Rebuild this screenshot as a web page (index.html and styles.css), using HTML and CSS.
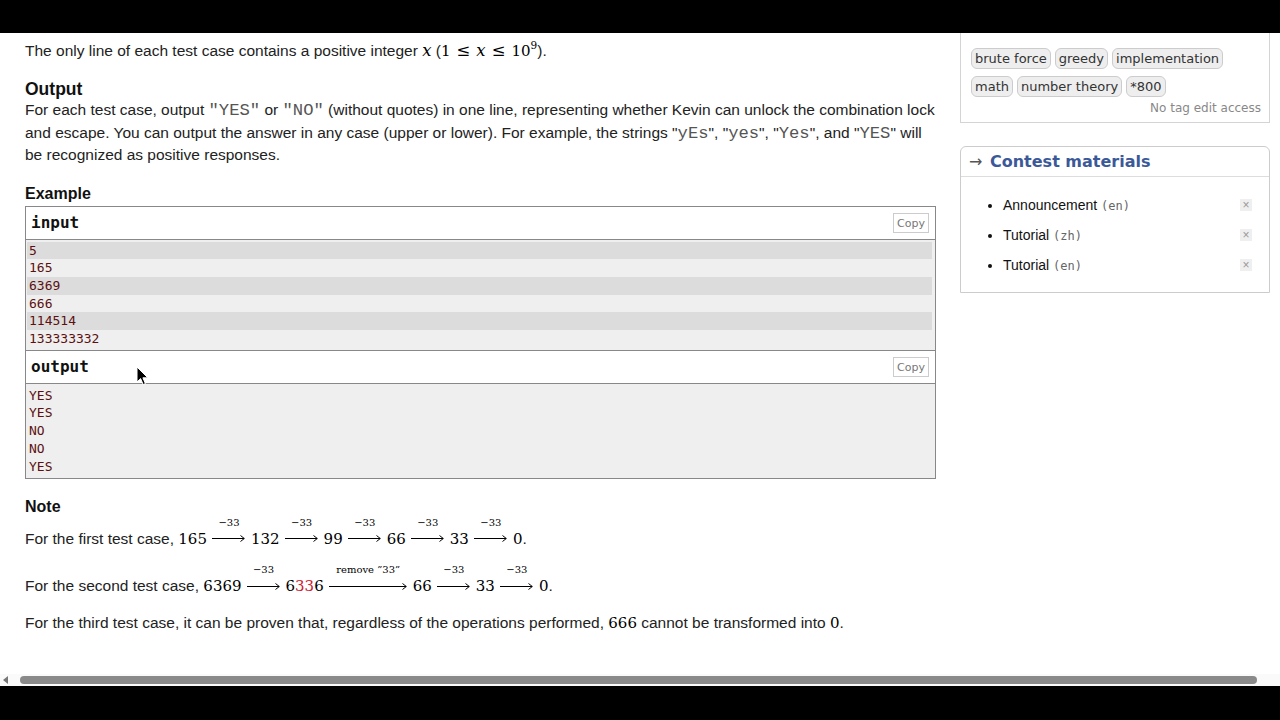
FILE: index.html
```html
<!DOCTYPE html>
<html lang="en">
<head>
    <meta charset="UTF-8">
    <meta name="viewport" content="width=device-width, initial-scale=1.0">
    <title>Problem - Codeforces</title>
    <link rel="stylesheet" href="styles.css">
</head>
<body>
    <div class="viewport">
        <div class="page">
            <div class="main">
                <p class="lead">The only line of each test case contains a positive integer <span class="m"><i>x</i></span> (<span class="m">1<span class="rel">≤</span><i>x</i><span class="rel">≤</span>10<sup>9</sup></span>).</p>

                <div class="section-title">Output</div>
                <p>For each test case, output <code>"YES"</code> or <code>"NO"</code> (without quotes) in one line, representing whether Kevin can unlock the combination lock and escape. You can output the answer in any case (upper or lower). For example, the strings "<code>yEs</code>", "<code>yes</code>", "<code>Yes</code>", and "<code>YES</code>" will be recognized as positive responses.</p>

                <div class="sample-title">Example</div>
                <div class="sample">
                    <div class="sample-head">
                        <span>input</span>
                        <button class="copy">Copy</button>
                    </div>
                    <div class="sample-body">
                        <div class="test-line odd">5</div>
                        <div class="test-line">165</div>
                        <div class="test-line odd">6369</div>
                        <div class="test-line">666</div>
                        <div class="test-line odd">114514</div>
                        <div class="test-line">133333332</div>
                    </div>
                    <div class="sample-head">
                        <span>output</span>
                        <button class="copy">Copy</button>
                    </div>
                    <div class="sample-body output">
                        <div class="test-line">YES</div>
                        <div class="test-line">YES</div>
                        <div class="test-line">NO</div>
                        <div class="test-line">NO</div>
                        <div class="test-line">YES</div>
                    </div>
                </div>

                <div class="note-title">Note</div>
                <p class="math-line">For the first test case, <span class="m">165</span><span class="arrow"><span class="arrow-label">−33</span><svg width="33" height="9" viewBox="0 0 33 9"><path d="M0 4.5H32.2M28.5 1.5L32.3 4.5L28.5 7.5"/></svg></span><span class="m">132</span><span class="arrow"><span class="arrow-label">−33</span><svg width="33" height="9" viewBox="0 0 33 9"><path d="M0 4.5H32.2M28.5 1.5L32.3 4.5L28.5 7.5"/></svg></span><span class="m">99</span><span class="arrow"><span class="arrow-label">−33</span><svg width="33" height="9" viewBox="0 0 33 9"><path d="M0 4.5H32.2M28.5 1.5L32.3 4.5L28.5 7.5"/></svg></span><span class="m">66</span><span class="arrow"><span class="arrow-label">−33</span><svg width="33" height="9" viewBox="0 0 33 9"><path d="M0 4.5H32.2M28.5 1.5L32.3 4.5L28.5 7.5"/></svg></span><span class="m">33</span><span class="arrow"><span class="arrow-label">−33</span><svg width="33" height="9" viewBox="0 0 33 9"><path d="M0 4.5H32.2M28.5 1.5L32.3 4.5L28.5 7.5"/></svg></span><span class="m">0</span>.</p>

                <p class="math-line">For the second test case, <span class="m">6369</span><span class="arrow"><span class="arrow-label">−33</span><svg width="33" height="9" viewBox="0 0 33 9"><path d="M0 4.5H32.2M28.5 1.5L32.3 4.5L28.5 7.5"/></svg></span><span class="m">6<span class="hl">33</span>6</span><span class="arrow"><span class="arrow-label">remove ”33”</span><svg width="78" height="9" viewBox="0 0 78 9"><path d="M0 4.5H77.2M73.5 1.5L77.3 4.5L73.5 7.5"/></svg></span><span class="m">66</span><span class="arrow"><span class="arrow-label">−33</span><svg width="33" height="9" viewBox="0 0 33 9"><path d="M0 4.5H32.2M28.5 1.5L32.3 4.5L28.5 7.5"/></svg></span><span class="m">33</span><span class="arrow"><span class="arrow-label">−33</span><svg width="33" height="9" viewBox="0 0 33 9"><path d="M0 4.5H32.2M28.5 1.5L32.3 4.5L28.5 7.5"/></svg></span><span class="m">0</span>.</p>

                <p>For the third test case, it can be proven that, regardless of the operations performed, <span class="m">666</span> cannot be transformed into <span class="m">0</span>.</p>
            </div>

            <div class="sidebar">
                <div class="box tags-box">
                    <div class="tags">
                        <span class="tag">brute force</span>
                        <span class="tag">greedy</span>
                        <span class="tag">implementation</span>
                        <span class="tag">math</span>
                        <span class="tag">number theory</span>
                        <span class="tag">*800</span>
                    </div>
                    <div class="tag-note">No tag edit access</div>
                </div>

                <div class="box materials">
                    <div class="box-title"><span class="title-arrow">→</span> Contest materials</div>
                    <ul>
                        <li>Announcement <span class="lang">(en)</span><span class="del">×</span></li>
                        <li>Tutorial <span class="lang">(zh)</span><span class="del">×</span></li>
                        <li>Tutorial <span class="lang">(en)</span><span class="del">×</span></li>
                    </ul>
                </div>
            </div>
        </div>

        <div class="hscroll">
            <span class="hscroll-left"></span>
            <span class="hscroll-thumb"></span>
        </div>
    </div>

    <svg class="cursor" width="13" height="20" viewBox="0 0 13 20"><path d="M1 1V16L4.6 12.6L7.2 18.6L9.4 17.6L6.9 11.8H11.8Z"/></svg>
</body>
</html>
```

FILE: styles.css
```css
body { margin: 0; padding-top: 33px; background: #000; font-family: "Liberation Sans", Arial, sans-serif; color: #222; }
.viewport { height: 653px; background: #fff; display: flex; flex-direction: column; overflow: hidden; }
.page { flex: 1; display: flex; gap: 24px; padding-left: 25px; overflow: hidden; }

/* problem statement */
.main { width: 911px; flex: none; font-size: 15.5px; line-height: 22.5px; }
.main p { margin: 0 0 14.5px; }
.main p.lead { margin: 0; padding-top: 7px; }
.m { font-family: "DejaVu Serif", "Times New Roman", serif; font-size: 15px; line-height: 1; color: #000; }
.m i { font-style: italic; font-size: 16.5px; }
.m sup { font-size: 10.5px; line-height: 0; vertical-align: 7px; }
.rel { margin: 0 6px; font-size: 16.5px; }
.hl { color: #cc2233; }
code { font-family: "Liberation Mono", "Courier New", monospace; font-size: 17.2px; line-height: 1; color: #555; }

.section-title { font-weight: bold; font-size: 17.5px; line-height: 20px; margin-top: 16.5px; color: #111; }
.sample-title { font-weight: bold; font-size: 16px; line-height: 20px; margin: 17px 0 2.5px; color: #111; }
.note-title { font-weight: bold; font-size: 16px; line-height: 20px; margin-top: 18px; color: #111; }

.sample { border: 1px solid #888; }
.sample-head { height: 32px; display: flex; align-items: center; justify-content: space-between; padding: 0 6px 0 5px; border-bottom: 1px solid #888; font-family: "DejaVu Sans Mono", Consolas, monospace; font-weight: bold; font-size: 16px; color: #111; }
.sample-body + .sample-head { border-top: 1px solid #888; }
.copy { height: 20px; padding: 0 3px; border: 1px solid #ccc; background: #fff; font-family: "DejaVu Sans", Verdana, sans-serif; font-size: 11px; color: #777; }
.sample-body { background: #efefef; padding: 1.5px 3px 2.5px 1px; font-family: "DejaVu Sans Mono", Consolas, monospace; font-size: 13px; line-height: 17.7px; color: #5c1010; }
.sample-body.output { padding-top: 2.5px; }
.test-line { padding-left: 2px; }
.test-line.odd { background: #dcdcdc; }

/* arrows with labels */
.math-line { color: #222; }
.arrow { display: inline-flex; flex-direction: column; align-items: center; vertical-align: 17.5px; margin: 0 5.5px; }
.arrow-label { font-family: "DejaVu Serif", "Times New Roman", serif; font-size: 10px; line-height: 12px; color: #000; }
.arrow svg { display: block; margin-top: 5.5px; }
.arrow path { fill: none; stroke: #000; stroke-width: 1; }

/* sidebar */
.sidebar { width: 310px; flex: none; font-family: "DejaVu Sans", Verdana, sans-serif; }
.box { border: 1px solid #d4d4d4; }
.tags-box { border-top: none; padding: 14.5px 8px 6px 10px; }
.tags { display: flex; flex-wrap: wrap; gap: 7px 4px; }
.tag { height: 19px; line-height: 19px; padding: 0 3px; border: 1px solid #ccc; border-radius: 6px; background: #eee; font-size: 13px; color: #333; }
.tag-note { text-align: right; font-size: 12px; line-height: 15px; margin-top: 4px; color: #888; }

.materials { margin-top: 23px; border-color: #ccc; border-radius: 6px 6px 0 0; }
.box-title { height: 29px; line-height: 30px; padding-left: 8px; border-bottom: 1px solid #ddd; font-size: 16px; font-weight: bold; color: #3b5998; }
.title-arrow { font-weight: normal; color: #555; margin-right: 2px; }
.materials ul { margin: 13px 0 12px; padding: 0 17px 0 42px; font-family: "Liberation Sans", Arial, sans-serif; font-size: 14px; line-height: 30px; color: #111; }
.lang { font-family: "DejaVu Sans Mono", monospace; font-size: 12px; line-height: 1; color: #666; }
.del { float: right; margin-top: 9px; width: 12px; height: 12px; line-height: 12px; text-align: center; background: #efefef; color: #999; font-size: 12px; }

/* horizontal scrollbar */
.hscroll { height: 12px; flex: none; display: flex; align-items: center; background: #fafafa; }
.hscroll-left { width: 0; height: 0; margin-left: 3px; border-right: 5px solid #777; border-top: 4px solid transparent; border-bottom: 4px solid transparent; }
.hscroll-thumb { width: 1237px; height: 8px; margin-left: 12px; border-radius: 4px; background: #8a8a8a; }

.cursor { position: absolute; left: 136px; top: 366px; }
.cursor path { fill: #000; stroke: #fff; stroke-width: 1; }
```
